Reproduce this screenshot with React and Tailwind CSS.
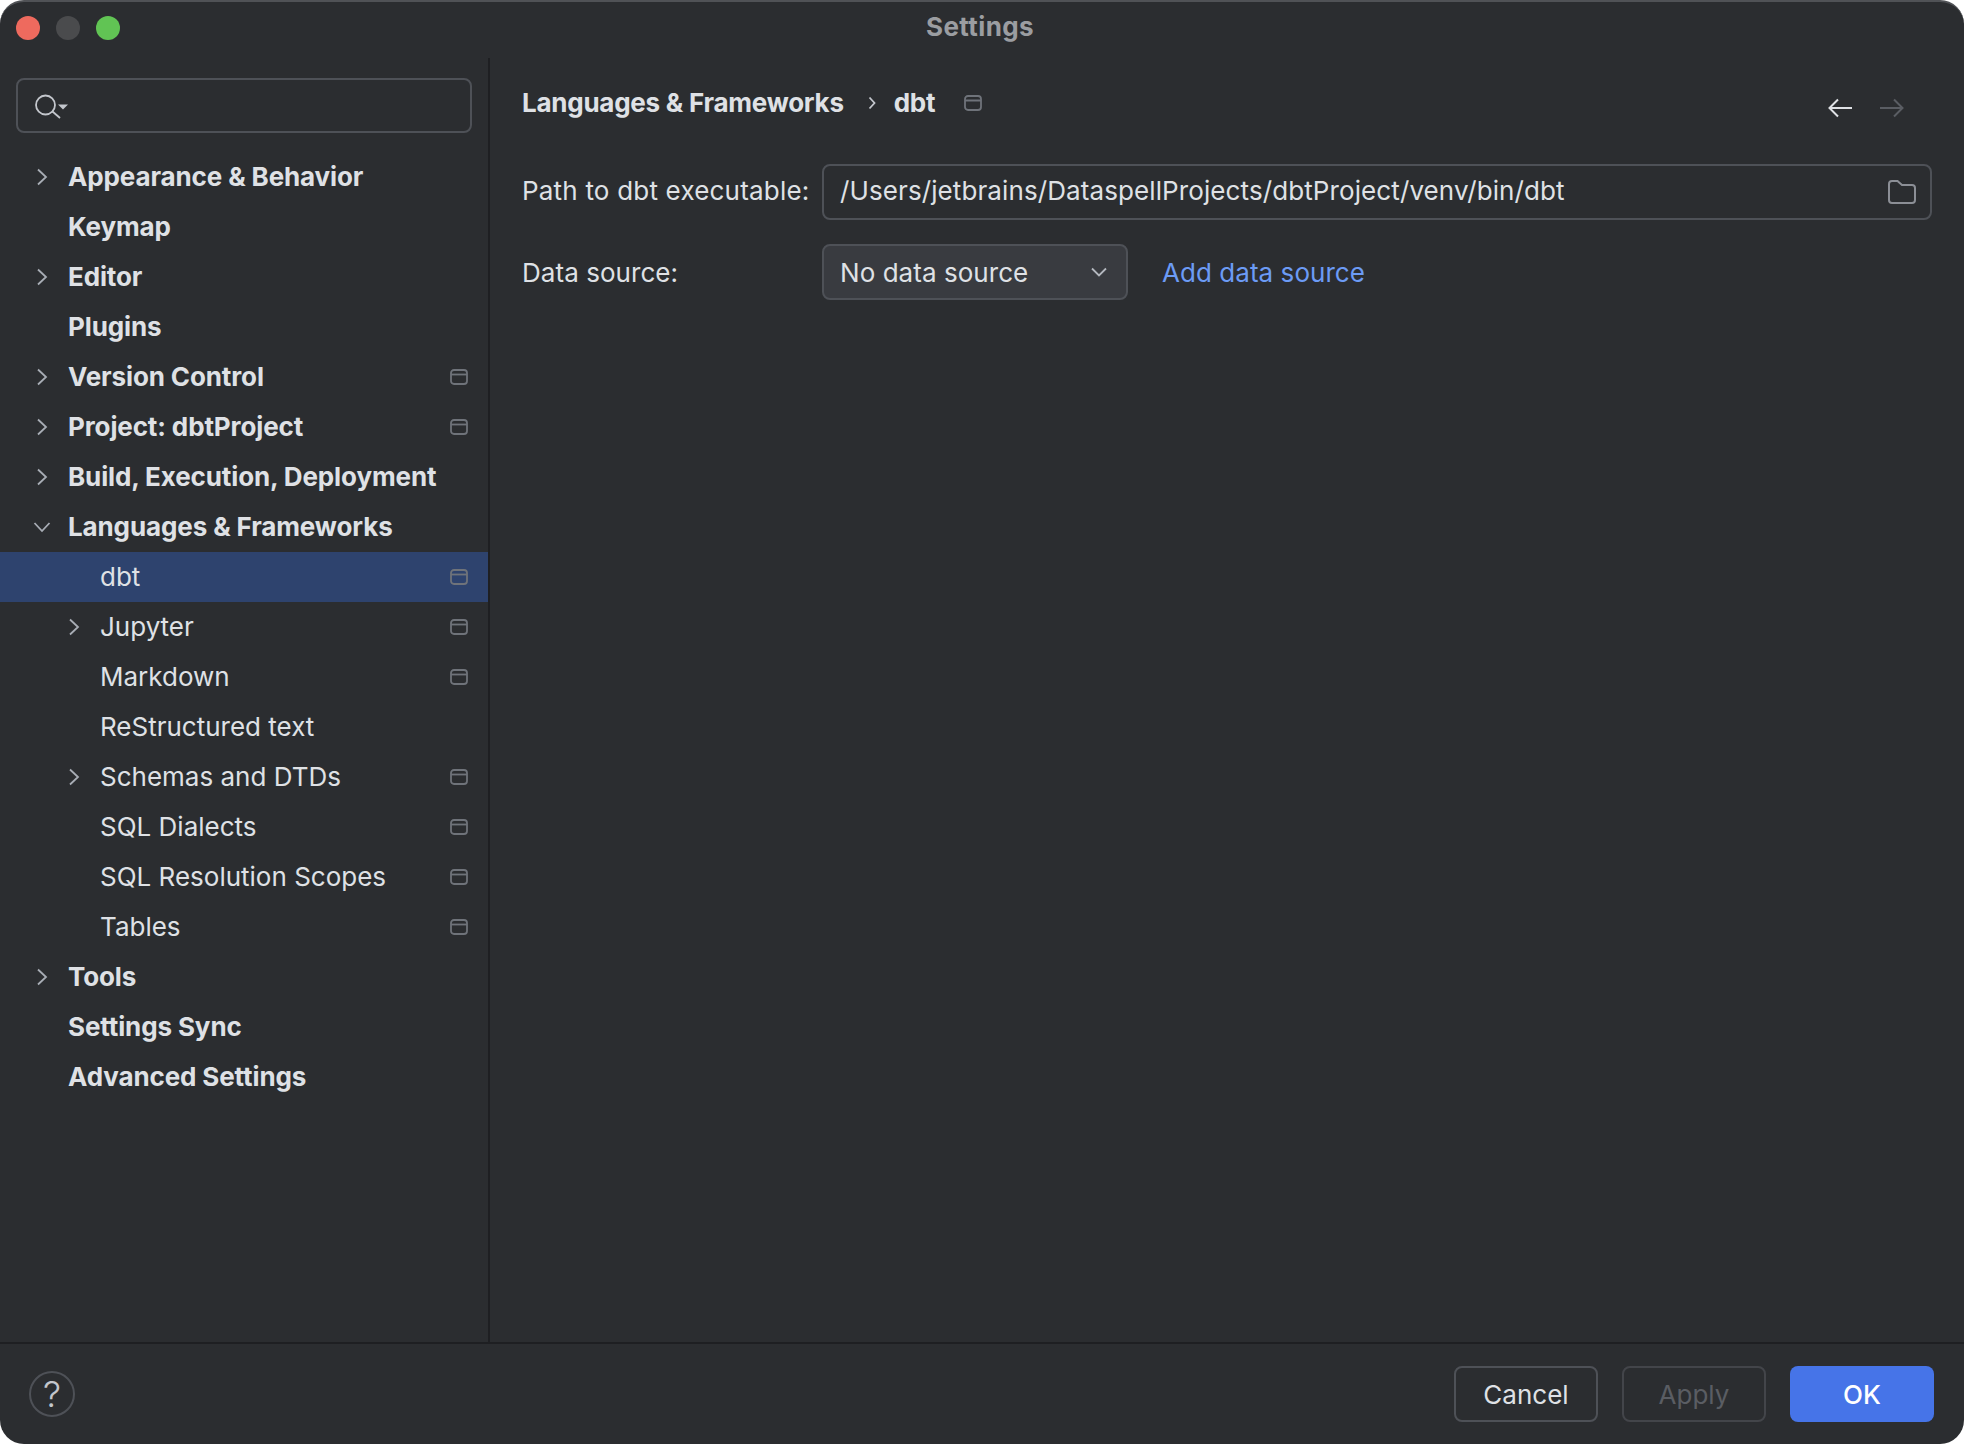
const treeItems = [
  { label: "Appearance & Behavior", level: 0, arrow: "right" },
  { label: "Keymap", level: 0 },
  { label: "Editor", level: 0, arrow: "right" },
  { label: "Plugins", level: 0 },
  { label: "Version Control", level: 0, arrow: "right", project: true },
  { label: "Project: dbtProject", level: 0, arrow: "right", project: true },
  { label: "Build, Execution, Deployment", level: 0, arrow: "right" },
  { label: "Languages & Frameworks", level: 0, arrow: "down" },
  { label: "dbt", level: 1, project: true, selected: true },
  { label: "Jupyter", level: 1, arrow: "right", project: true },
  { label: "Markdown", level: 1, project: true },
  { label: "ReStructured text", level: 1 },
  { label: "Schemas and DTDs", level: 1, arrow: "right", project: true },
  { label: "SQL Dialects", level: 1, project: true },
  { label: "SQL Resolution Scopes", level: 1, project: true },
  { label: "Tables", level: 1, project: true },
  { label: "Tools", level: 0, arrow: "right" },
  { label: "Settings Sync", level: 0 },
  { label: "Advanced Settings", level: 0 },
]

const ProjectIcon = () => (
  <svg width="18" height="16" viewBox="0 0 18 16" fill="none" stroke="#6f737a" strokeWidth="1.8">
    <rect x="1" y="1" width="16" height="14" rx="3" />
    <path d="M1 5.5h16" />
  </svg>
)

const Chevron = ({ down }) =>
  down ? (
    <svg width="18" height="12" viewBox="0 0 18 12" fill="none" stroke="#a8adb5" strokeWidth="1.8">
      <path d="M1.5 2l7.5 8 7.5-8" />
    </svg>
  ) : (
    <svg width="12" height="18" viewBox="0 0 12 18" fill="none" stroke="#a8adb5" strokeWidth="1.8">
      <path d="M2 1.5l8 7.5-8 7.5" />
    </svg>
  )

const TreeRow = ({ item }) => (
  <div className={`flex h-[50px] items-center ${item.level === 0 ? "pl-[28px]" : "pl-[60px]"} pr-[20px] ${item.selected ? "bg-[#2e436e]" : ""}`}>
    <div className="flex w-[40px] shrink-0 items-center pl-[8px]">
      {item.arrow === "right" && <Chevron />}
      {item.arrow === "down" && <div className="-ml-[3px]"><Chevron down /></div>}
    </div>
    <span className={`pb-[1px] text-[26px] text-[#dfe1e5] ${item.level === 0 ? "font-bold tracking-[-0.12px]" : "font-normal"}`}>{item.label}</span>
    {item.project && <div className="ml-auto flex"><ProjectIcon /></div>}
  </div>
)

export default function App() {
  return (
    <div className="h-[1444px] w-[1964px] bg-white font-['Inter',sans-serif]">
      <div className="flex h-full flex-col overflow-hidden rounded-[24px] border-t-2 border-[#505256] bg-[#2b2d30]">
        <div className="relative flex h-[56px] shrink-0 items-center justify-center pb-[8px] pr-[4px]">
          <div className="absolute left-[16px] top-[14px] flex gap-[16px]">
            <div className="h-[24px] w-[24px] rounded-full bg-[#ee6a5e]" />
            <div className="h-[24px] w-[24px] rounded-full bg-[#4a4b4d]" />
            <div className="h-[24px] w-[24px] rounded-full bg-[#61c454]" />
          </div>
          <span className="text-[26px] font-bold tracking-[0.4px] text-[#9b9da1]">Settings</span>
        </div>

        <div className="flex min-h-0 flex-1">
          <div className="w-[490px] shrink-0 border-r-2 border-[#1e1f22]">
            <div className="px-[16px] pt-[20px]">
              <div className="flex h-[55px] items-center rounded-[8px] border-2 border-[#4e5157] pl-[16px]">
                <svg width="34" height="26" viewBox="0 0 34 26" fill="none">
                  <circle cx="11.5" cy="12" r="9.5" stroke="#c3c6cc" strokeWidth="1.8" />
                  <path d="M18.5 18.5L26 25" stroke="#c3c6cc" strokeWidth="1.8" />
                  <path d="M24 11.5h10l-5 5z" fill="#c3c6cc" />
                </svg>
              </div>
            </div>
            <div className="mt-[19px]">
              {treeItems.map((item) => (
                <TreeRow key={item.label} item={item} />
              ))}
            </div>
          </div>

          <div className="min-w-0 flex-1 px-[32px]">
            <div className="mt-[20px] flex h-[50px] items-center">
              <span className="pb-[2px] text-[26px] font-bold tracking-[-0.25px] text-[#dfe1e5]">Languages &amp; Frameworks</span>
              <svg className="ml-[24px]" width="8" height="14" viewBox="0 0 8 14" fill="none" stroke="#c3c6cc" strokeWidth="1.8">
                <path d="M1.5 1.5L6.5 7l-5 5.5" />
              </svg>
              <span className="ml-[18px] pb-[2px] text-[26px] font-bold tracking-[-0.25px] text-[#dfe1e5]">dbt</span>
              <div className="ml-[29px] flex"><ProjectIcon /></div>
              <div className="ml-auto mr-[28px] mt-[10px] flex gap-[28px]">
                <svg width="24" height="20" viewBox="0 0 24 20" fill="none" stroke="#dfe1e5" strokeWidth="2">
                  <path d="M24 10H2M10 1.5L1.5 10l8.5 8.5" />
                </svg>
                <svg width="24" height="20" viewBox="0 0 24 20" fill="none" stroke="#5a5d63" strokeWidth="2">
                  <path d="M0 10h22M14 1.5L22.5 10 14 18.5" />
                </svg>
              </div>
            </div>

            <div className="mt-[36px] flex h-[56px] items-center">
              <span className="w-[300px] shrink-0 pb-[3px] text-[26px] tracking-[0.2px] text-[#dfe1e5]">Path to dbt executable:</span>
              <div className="flex h-full flex-1 items-center justify-between rounded-[8px] border-2 border-[#4e5157] pl-[16px] pr-[14px]">
                <span className="pb-[3px] text-[26px] tracking-[0.1px] text-[#dfe1e5]">/Users/jetbrains/DataspellProjects/dbtProject/venv/bin/dbt</span>
                <svg width="28" height="24" viewBox="0 0 28 24" fill="none" stroke="#8c8f96" strokeWidth="2">
                  <path d="M1 4a3 3 0 0 1 3-3h5.5l4.5 4h10a3 3 0 0 1 3 3v12a3 3 0 0 1-3 3H4a3 3 0 0 1-3-3z" />
                </svg>
              </div>
            </div>

            <div className="mt-[24px] flex h-[56px] items-center">
              <span className="w-[300px] shrink-0 text-[26px] tracking-[0.05px] text-[#dfe1e5]">Data source:</span>
              <div className="flex h-full w-[306px] items-center justify-between rounded-[8px] border-2 border-[#4e5157] bg-[#393b40] pl-[16px] pr-[18px]">
                <span className="text-[26px] tracking-[0.05px] text-[#dfe1e5]">No data source</span>
                <svg width="18" height="12" viewBox="0 0 18 12" fill="none" stroke="#b4b8bf" strokeWidth="1.8">
                  <path d="M2 2.5l7 7 7-7" />
                </svg>
              </div>
              <a className="ml-[34px] text-[26px] tracking-[0.05px] text-[#6c9bf5]">Add data source</a>
            </div>
          </div>
        </div>

        <div className="flex h-[102px] shrink-0 items-center justify-between border-t-2 border-[#1e1f22] pl-[29px] pr-[30px]">
          <div className="flex h-[46px] w-[46px] items-center justify-center rounded-full border-2 border-[#4e5157] text-[36px] font-light leading-none text-[#c3c6cc]">?</div>
          <div className="flex gap-[24px]">
            <div className="flex h-[56px] w-[144px] items-center justify-center rounded-[8px] border-2 border-[#4e5157] text-[26px] text-[#dfe1e5]">Cancel</div>
            <div className="flex h-[56px] w-[144px] items-center justify-center rounded-[8px] border-2 border-[#43454a] text-[26px] text-[#5a5d63]">Apply</div>
            <div className="flex h-[56px] w-[144px] items-center justify-center rounded-[8px] bg-[#4674e8] text-[26px] font-medium text-white">OK</div>
          </div>
        </div>
      </div>
    </div>
  )
}
